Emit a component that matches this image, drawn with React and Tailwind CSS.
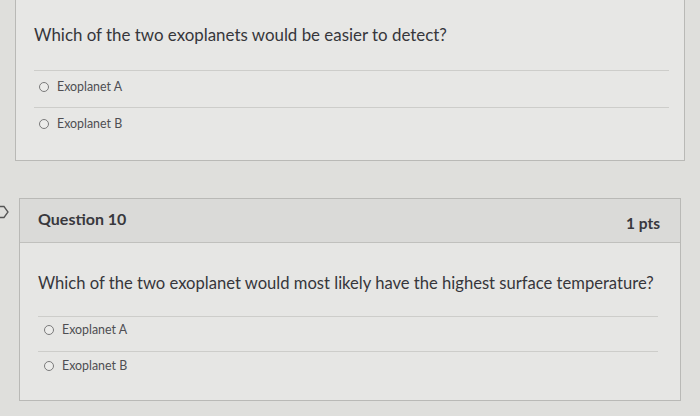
import React from "react";

function Radio() {
  return (
    <span className="inline-block w-[10px] h-[10px] rounded-full border border-[#7a7a7a] bg-[#ececea]" />
  );
}

function Option({ label, cls }) {
  return (
    <div className={`flex items-center ${cls}`}>
      <Radio />
      <span className="ml-[8px] text-[12.4px] text-[#4e4e52]">{label}</span>
    </div>
  );
}

export default function App() {
  return (
    <div
      className="w-[700px] h-[416px] overflow-hidden bg-[#dfdfdc] text-[#37373c]"
      style={{ fontFamily: "Lato, 'Open Sans', sans-serif" }}
    >
      {/* First card (top cut off) */}
      <div className="ml-[15px] w-[670px] h-[161px] border border-t-0 border-[#b9b9b6] bg-[#e7e7e5] pt-[23px] pl-[18px] pr-[15px]">
        <div className="text-[16.9px] leading-[24px] text-[#36363b]">
          Which of the two exoplanets would be easier to detect?
        </div>
        <div className="mt-[23px] border-t border-[#cdcdca]">
          <Option label="Exoplanet A" cls="pl-[5px] h-[36px] pb-[4px]" />
          <div className="border-t border-[#cdcdca]" />
          <Option label="Exoplanet B" cls="pl-[5px] h-[36px] pb-[4px]" />
        </div>
      </div>

      {/* Second question row */}
      <div className="flex mt-[37px]">
        <div className="w-[19px] pt-[7px]">
          <svg width="10" height="14" viewBox="0 0 10 14">
            <path d="M0 1.5 H4 L8 7 L4 12.5 H0" fill="none" stroke="#555" strokeWidth="1.3" />
          </svg>
        </div>
        <div className="w-[662px] h-[203px] border border-[#b9b9b6] bg-[#e6e6e4]">
          <div className="h-[44px] bg-[#dadad8] border-b border-[#c0c0bd] flex items-start justify-between pl-[18px] pr-[20px]">
            <span className="mt-[9px] text-[16px] font-bold leading-[22px] text-[#38383d]">Question 10</span>
            <span className="mt-[13px] text-[15.5px] font-bold leading-[22px] text-[#38383d]">1 pts</span>
          </div>
          <div className="pl-[18px] pr-[22px] pt-[28px]">
            <div className="text-[16.6px] leading-[24px] text-[#36363b]">
              Which of the two exoplanet would most likely have the highest surface temperature?
            </div>
            <div className="mt-[21px] border-t border-[#cdcdca]">
              <Option label="Exoplanet A" cls="pl-[6px] h-[34px] pb-[8px]" />
              <div className="border-t border-[#cdcdca]" />
              <Option label="Exoplanet B" cls="pl-[6px] h-[34px] pb-[6px]" />
            </div>
          </div>
        </div>
      </div>
    </div>
  );
}
